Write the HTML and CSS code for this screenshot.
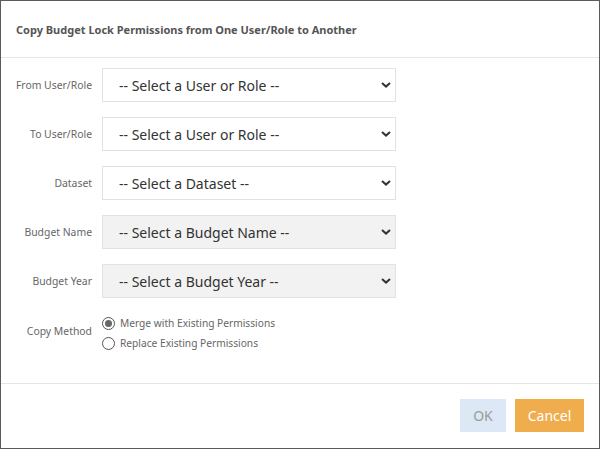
FILE: index.html
```html
<!DOCTYPE html>
<html>
<head>
<meta charset="utf-8">
<link rel="stylesheet" href="styles.css">
</head>
<body>
<div class="dialog">
  <div class="dlg-header">
    <h1 class="dlg-title">Copy Budget Lock Permissions from One User/Role to Another</h1>
  </div>
  <div class="dlg-body">
    <div class="form-grid">
      <label class="lbl">From User/Role</label>
      <div class="sel-wrap">
        <select class="sel"><option>-- Select a User or Role --</option></select>
        <svg class="chev" width="10" height="6" viewBox="0 0 10 6"><path d="M1 1 L5 4.6 L9 1" fill="none" stroke="#333" stroke-width="2"/></svg>
      </div>

      <label class="lbl">To User/Role</label>
      <div class="sel-wrap">
        <select class="sel"><option>-- Select a User or Role --</option></select>
        <svg class="chev" width="10" height="6" viewBox="0 0 10 6"><path d="M1 1 L5 4.6 L9 1" fill="none" stroke="#333" stroke-width="2"/></svg>
      </div>

      <label class="lbl">Dataset</label>
      <div class="sel-wrap">
        <select class="sel"><option>-- Select a Dataset --</option></select>
        <svg class="chev" width="10" height="6" viewBox="0 0 10 6"><path d="M1 1 L5 4.6 L9 1" fill="none" stroke="#333" stroke-width="2"/></svg>
      </div>

      <label class="lbl">Budget Name</label>
      <div class="sel-wrap">
        <select class="sel sel-disabled"><option>-- Select a Budget Name --</option></select>
        <svg class="chev" width="10" height="6" viewBox="0 0 10 6"><path d="M1 1 L5 4.6 L9 1" fill="none" stroke="#333" stroke-width="2"/></svg>
      </div>

      <label class="lbl">Budget Year</label>
      <div class="sel-wrap">
        <select class="sel sel-disabled"><option>-- Select a Budget Year --</option></select>
        <svg class="chev" width="10" height="6" viewBox="0 0 10 6"><path d="M1 1 L5 4.6 L9 1" fill="none" stroke="#333" stroke-width="2"/></svg>
      </div>

      <label class="lbl lbl-method">Copy Method</label>
      <div class="radios">
        <label class="radio-row"><span class="radio checked"></span>Merge with Existing Permissions</label>
        <label class="radio-row"><span class="radio"></span>Replace Existing Permissions</label>
      </div>
    </div>
  </div>
  <div class="dlg-footer">
    <button class="btn btn-ok">OK</button>
    <button class="btn btn-cancel">Cancel</button>
  </div>
</div>
</body>
</html>
```
FILE: styles.css
```css
html, body {
  margin: 0;
  padding: 0;
  background: #fff;
}
.dialog {
  width: 600px;
  height: 449px;
  box-sizing: border-box;
  border: 1px solid #5a5a5a;
  display: flex;
  flex-direction: column;
  font-family: "Noto Sans", "Open Sans", sans-serif;
  color: #333;
}
.dlg-header {
  height: 56px;
  border-bottom: 1px solid #e5e5e5;
  display: flex;
  align-items: center;
  padding-left: 15px;
}
.dlg-title {
  margin: 0;
  font-size: 11px;
  font-weight: bold;
  color: #555;
}
.dlg-body {
  flex: 1;
  padding-top: 10px;
}
.form-grid {
  display: grid;
  grid-template-columns: 91px 294px;
  column-gap: 10px;
  row-gap: 15px;
  align-items: center;
}
.lbl {
  font-size: 10.4px;
  color: #666;
  text-align: right;
}
.sel-wrap {
  position: relative;
  height: 34px;
}
.sel {
  appearance: none;
  -webkit-appearance: none;
  width: 100%;
  height: 34px;
  box-sizing: border-box;
  border: 1px solid #e2e2e2;
  border-radius: 0;
  background: #fff;
  padding: 0 0 0 16px;
  font-family: "Noto Sans", "Open Sans", sans-serif;
  font-size: 14px;
  color: #333;
  outline: none;
}
.sel-disabled {
  background: #f2f2f2;
}
.chev {
  position: absolute;
  right: 5px;
  top: 14px;
  pointer-events: none;
}
.lbl-method {
  align-self: center;
  margin-top: -4px;
}
.radios {
  display: flex;
  flex-direction: column;
}
.radio-row {
  display: flex;
  align-items: center;
  font-size: 10.2px;
  color: #666;
  height: 20px;
}
.radio {
  width: 11px;
  height: 11px;
  border: 1px solid #555;
  border-radius: 50%;
  margin-right: 5px;
  position: relative;
  box-sizing: content-box;
}
.radio.checked::after {
  content: "";
  position: absolute;
  left: 2px;
  top: 2px;
  width: 7px;
  height: 7px;
  border-radius: 50%;
  background: #666;
}
.dlg-footer {
  border-top: 1px solid #e5e5e5;
  display: flex;
  justify-content: flex-end;
  gap: 9px;
  padding: 15px 15px 16px 0;
}
.btn {
  height: 33px;
  border: none;
  border-radius: 0;
  font-family: "Noto Sans", "Open Sans", sans-serif;
  font-size: 14px;
  padding: 0 12px;
}
.btn-ok {
  background: #dce8f5;
  color: #9a9a9a;
  width: 46px;
}
.btn-cancel {
  background: #f0ad4e;
  color: #fff;
  width: 69px;
}
```
